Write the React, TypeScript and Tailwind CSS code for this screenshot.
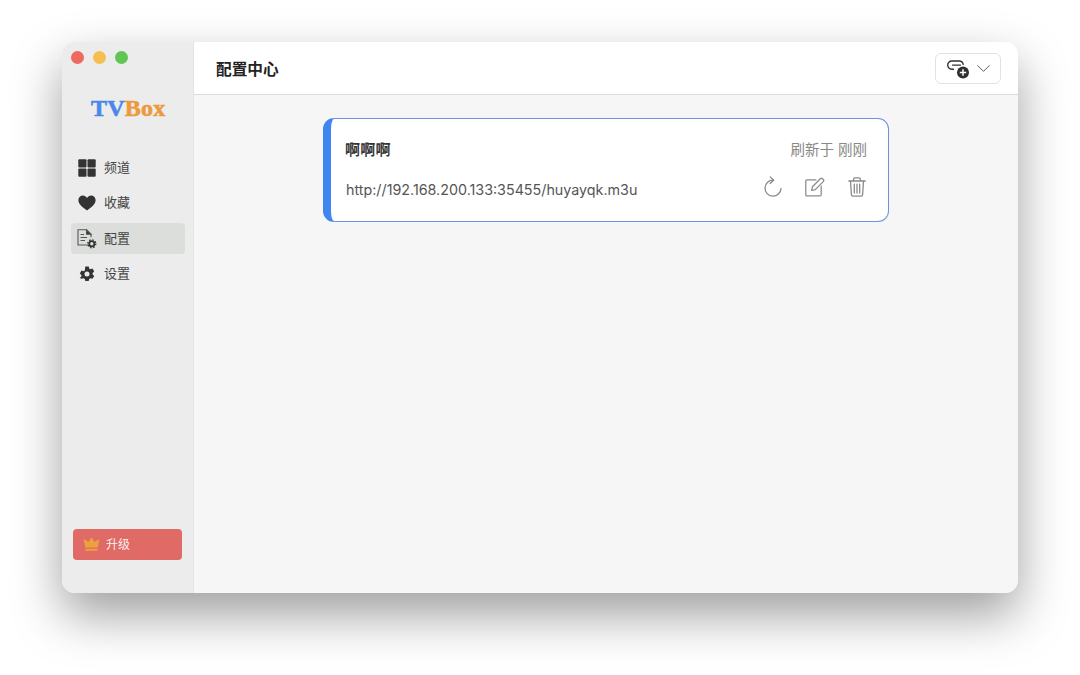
import { ChevronDown } from "lucide-react";

const cjk = "font-['Inter','Noto_Sans_CJK_SC',sans-serif]";

function GridIcon() {
  return (
    <svg width="18" height="18" viewBox="0 0 18 18" fill="#333">
      <rect x="0.3" y="0.3" width="8.200" height="8.200" rx="1" />
      <rect x="9.500" y="0.3" width="8.200" height="8.200" rx="1" />
      <rect x="0.3" y="9.500" width="8.200" height="8.200" rx="1" />
      <rect x="9.500" y="9.500" width="8.200" height="8.200" rx="1" />
    </svg>
  );
}

function HeartIcon() {
  return (
    <svg width="18" height="16" viewBox="0 0 18 16" fill="#333">
      <path d="M9 15.600C3.600 11.800.4 8.900.4 5.100.4 2.300 2.500.4 4.900.4 6.600.4 8.100 1.300 9 2.900 9.900 1.300 11.400.4 13.100.4c2.400 0 4.500 1.900 4.500 4.700 0 3.800-3.200 6.700-8.600 10.500z" />
    </svg>
  );
}

function ConfigIcon() {
  return (
    <svg width="20" height="20" viewBox="0 0 20 20" fill="none" stroke="#555" strokeWidth="1.100">
      <path d="M11.500 16H1V.8h8.500L14 5.300v3" />
      <path d="M9.500.8L14 5.300H9.500z" fill="#333" />
      <path d="M3.500 5.500h3.500M3.500 8.500h6.500M3.500 11.500h4.500" />
      <circle cx="14.800" cy="14.800" r="2.600" stroke="#333" strokeWidth="1.800" />
      <circle cx="14.800" cy="14.800" r="4" stroke="#333" strokeWidth="1.300" strokeDasharray="1.500 1.640" />
    </svg>
  );
}

function GearIcon() {
  return (
    <svg width="16" height="16" viewBox="0 0 16 16">
      <path
        fill="#333"
        fillRule="evenodd"
        d="M6.300.4h3.400l.5 2.100 1.200.7 2.100-.6 1.700 2.900-1.600 1.500v1.400l1.600 1.500-1.700 2.900-2.100-.6-1.200.7-.5 2.100H6.300l-.5-2.100-1.200-.7-2.100.6L.8 11.900l1.600-1.500V9L.8 7.500l1.700-2.900 2.100.6 1.200-.7zM8 5.500a2.500 2.500 0 1 0 0 5 2.500 2.500 0 0 0 0-5z"
      />
    </svg>
  );
}

function CrownIcon() {
  return (
    <svg width="17" height="15" viewBox="0 0 17 15" fill="#eda13c">
      <path d="M8.500 0.300l2.800 4.600 5.200-2.800-1.900 8.300H2.400L.5 2.100l5.200 2.800z" />
      <rect x="2.500" y="11.800" width="12" height="2" rx="0.4" />
    </svg>
  );
}

function LinkPlusIcon() {
  return (
    <svg className="mt-[2px]" width="23" height="20" viewBox="0 0 23 20" fill="none" stroke="#333" strokeWidth="1.400" strokeLinecap="round">
      <path d="M6.500 10.200H4.800a4.100 4.100 0 0 1 0-8.200h7.400a4.100 4.100 0 0 1 4 3.300" />
      <path d="M5.500 6.100h8" />
      <circle cx="16" cy="13.500" r="6" fill="#2f2f2f" stroke="none" />
      <path d="M16 10.300v6.400M12.800 13.500h6.400" stroke="#fff" strokeWidth="1.500" strokeLinecap="butt" />
    </svg>
  );
}

function RefreshIcon() {
  return (
    <svg width="18" height="21" viewBox="0 0 18 21" fill="none" stroke="#8a8a8a" strokeWidth="1.300" strokeLinecap="round" strokeLinejoin="round">
      <path d="M17 12.500A8 8 0 1 1 9.400 4.200" />
      <path d="M6.200.9l3.400 3.300-3.400 3.300" />
    </svg>
  );
}

function EditIcon() {
  return (
    <svg width="20" height="20" viewBox="0 0 21 20" fill="none" stroke="#8a8a8a" strokeWidth="1.300" strokeLinecap="round" strokeLinejoin="round">
      <path d="M11.500 2.600H2a1.200 1.200 0 0 0-1.200 1.200v14.400A1.200 1.200 0 0 0 2 19.400h13.800a1.200 1.200 0 0 0 1.200-1.200V9" />
      <path d="M7.800 9.700L16.400 1.100a1.200 1.200 0 0 1 1.700 0l1.300 1.300a1.200 1.200 0 0 1 0 1.700l-8.600 8.600-3.800 1z" />
    </svg>
  );
}

function TrashIcon() {
  return (
    <svg width="18" height="20" viewBox="0 0 18 20" fill="none" stroke="#8a8a8a" strokeWidth="1.300" strokeLinecap="round" strokeLinejoin="round">
      <path d="M.8 4h16.400" />
      <path d="M5.600 3.800V2.200A1.400 1.400 0 0 1 7 .8h4a1.400 1.400 0 0 1 1.400 1.400v1.600" />
      <path d="M2.500 4.200l.9 13.400a1.600 1.600 0 0 0 1.600 1.600h8a1.600 1.600 0 0 0 1.600-1.600l.9-13.400" />
      <path d="M6.300 7.200v8.800M9 7.200v8.800M11.700 7.200v8.800" />
    </svg>
  );
}

function NavItem({ icon, label, active }: { icon: React.ReactNode; label: string; active?: boolean }) {
  return (
    <div className={`flex h-[31px] items-center rounded-[4px] ${active ? "bg-[#dcdedc]" : ""}`}>
      <div className="flex w-[33px] shrink-0 justify-center pr-[1px]">{icon}</div>
      <span className="text-[13px] text-[#444]">{label}</span>
    </div>
  );
}

function Sidebar() {
  return (
    <div className="flex w-[132px] shrink-0 flex-col border-r border-[#e4e4e4] bg-[#ececec] pr-[8px] pb-[33px] pl-[9px]">
      <div className="flex gap-[9px] pt-[9px]">
        <span className="size-[13px] rounded-full bg-[#ec6a5e]" />
        <span className="size-[13px] rounded-full bg-[#f4bf4f]" />
        <span className="size-[13px] rounded-full bg-[#61c554]" />
      </div>
      <div className="mt-[32px] pl-[20px] font-['Liberation_Serif',serif] text-[24px] leading-[24px] font-bold tracking-[0.2px] [-webkit-text-stroke:0.6px_currentColor]">
        <span className="text-[#4a87e8]">TV</span>
        <span className="text-[#ec9a3e]">Box</span>
      </div>
      <div className="mt-[32px] flex flex-col gap-[4.500px]">
        <NavItem icon={<GridIcon />} label="频道" />
        <NavItem icon={<HeartIcon />} label="收藏" />
        <NavItem icon={<ConfigIcon />} label="配置" active />
        <NavItem icon={<GearIcon />} label="设置" />
      </div>
      <div className="mt-auto ml-[2px] flex h-[31px] w-[109px] items-center gap-[6px] rounded-[4px] bg-[#e06a66] pl-[10px] text-[12px] text-[#fdf0ee]">
        <CrownIcon />
        <span>升级</span>
      </div>
    </div>
  );
}

function ConfigCard() {
  return (
    <div className="mx-auto flex h-[104px] w-[566px] rounded-[11px] border border-[#6f92e0] border-l-[8px] border-l-[#3f86f0] bg-white pr-[21px] pl-[14px]">
      <div className="flex flex-1 flex-col">
        <div className="flex h-[62px] items-center justify-between">
          <span className="text-[15px] font-semibold tracking-[0.3px] text-[#333]">啊啊啊</span>
          <span className="text-[14.500px] text-[#888]">刷新于 刚刚</span>
        </div>
        <div className="-mt-[5px] flex items-start justify-between">
          <span className="ml-px pt-[3px] text-[14.300px] text-[#555]">http://192.168.200.133:35455/huyayqk.m3u</span>
          <div className="flex items-center gap-[23px] pr-[1px]">
            <RefreshIcon />
            <EditIcon />
            <TrashIcon />
          </div>
        </div>
      </div>
    </div>
  );
}

export default function App() {
  return (
    <div className={`h-[675px] w-[1080px] overflow-hidden bg-white pt-[42px] pl-[62px] ${cjk}`}>
      <div className="flex h-[551px] w-[956px] overflow-hidden rounded-[13px] shadow-[0_22px_50px_rgba(0,0,0,0.38)]">
        <Sidebar />
        <div className="flex flex-1 flex-col bg-[#f6f6f6]">
          <div className="flex h-[53px] shrink-0 items-center justify-between border-b border-[#dcdcdc] bg-white pr-[17px] pl-[22px]">
            <span className="pt-[3px] text-[15.700px] font-semibold text-[#222]">配置中心</span>
            <div className="flex h-[31px] w-[66px] items-center justify-center gap-[2px] rounded-[6px] border border-[#e2e2e2] bg-white pl-[6px]">
              <LinkPlusIcon />
              <ChevronDown size={23} strokeWidth={1} className="text-[#555]" />
            </div>
          </div>
          <div className="pt-[23px]">
            <ConfigCard />
          </div>
        </div>
      </div>
    </div>
  );
}
